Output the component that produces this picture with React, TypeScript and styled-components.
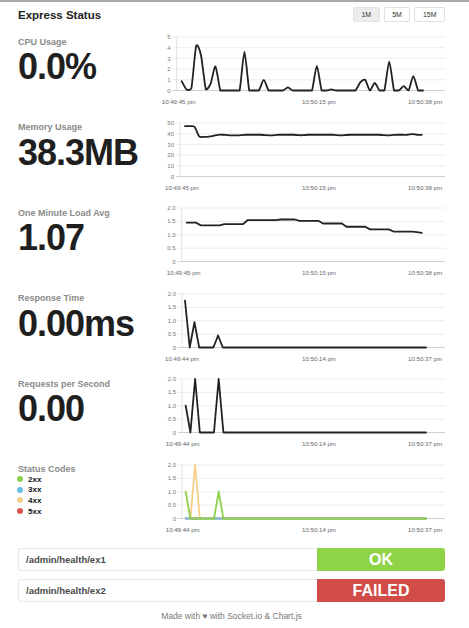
import React from "react";
import styled, { createGlobalStyle } from "styled-components";

const GlobalStyle = createGlobalStyle`
  html, body {
    margin: 0;
    padding: 0;
    background: #fff;
  }
  body {
    font-family: "Liberation Sans", Arial, Helvetica, sans-serif;
    color: #222;
  }
`;

const CHART_W = 285;
const CHART_H = 78;
const GRID_TOP = 6;
const ZERO_Y = 59.5;

type Series = { color: string; data: number[] };

type ChartProps = {
  series: Series[];
  max: number;
  ticks: string[];
  axisX: number;
  x0: number;
  x1: number;
  times: [string, string, string];
  smooth?: boolean;
};

const pad = (arr: number[], n: number) =>
  arr.concat(Array(Math.max(0, n - arr.length)).fill(0));

const steps = (list: [number, number][]) =>
  list.flatMap(([count, v]) => Array(count).fill(v) as number[]);

function buildPath(pts: [number, number][], smooth: boolean) {
  if (!smooth) return "M" + pts.map((p) => p.join(",")).join("L");
  const clamp = (y: number) => Math.min(ZERO_Y, Math.max(GRID_TOP - 2, y));
  let d = `M${pts[0][0]},${pts[0][1]}`;
  for (let i = 0; i < pts.length - 1; i++) {
    const p0 = pts[i - 1] || pts[i];
    const p1 = pts[i];
    const p2 = pts[i + 1];
    const p3 = pts[i + 2] || p2;
    const s = 0.7;
    const c1x = p1[0] + ((p2[0] - p0[0]) / 6) * s;
    const c1y = clamp(p1[1] + ((p2[1] - p0[1]) / 6) * s);
    const c2x = p2[0] - ((p3[0] - p1[0]) / 6) * s;
    const c2y = clamp(p2[1] - ((p3[1] - p1[1]) / 6) * s);
    d += `C${c1x},${c1y} ${c2x},${c2y} ${p2[0]},${p2[1]}`;
  }
  return d;
}

function Chart({ series, max, ticks, axisX, x0, x1, times, smooth }: ChartProps) {
  const plotH = ZERO_Y - GRID_TOP;
  const stepY = plotH / (ticks.length - 1);
  return (
    <ChartSvg width={CHART_W} height={CHART_H} viewBox={`0 0 ${CHART_W} ${CHART_H}`}>
      {ticks.map((t, k) => {
        const y = ZERO_Y - k * stepY;
        return (
          <g key={t}>
            <line
              x1={axisX - 4}
              x2={CHART_W}
              y1={y}
              y2={y}
              stroke={k === 0 ? "#cfcfcf" : "#ececec"}
              strokeWidth={1}
            />
            <TickText x={axisX - 6} y={y} dy="0.35em" textAnchor="end">
              {t}
            </TickText>
          </g>
        );
      })}
      <line x1={axisX} x2={axisX} y1={GRID_TOP} y2={ZERO_Y} stroke="#e2e2e2" strokeWidth={1} />
      {series.map((s, idx) => {
        const n = s.data.length;
        const pts = s.data.map(
          (v, i) =>
            [x0 + ((x1 - x0) * i) / (n - 1), ZERO_Y - (v / max) * plotH] as [number, number]
        );
        return (
          <path
            key={idx}
            d={buildPath(pts, !!smooth)}
            fill="none"
            stroke={s.color}
            strokeWidth={1.8}
            strokeLinejoin="round"
            strokeLinecap="round"
          />
        );
      })}
      <TimeText x={x0 - 3} y={72.5} textAnchor="middle">
        {times[0]}
      </TimeText>
      <TimeText x={159} y={72.5} textAnchor="middle">
        {times[1]}
      </TimeText>
      <TimeText x={282} y={72.5} textAnchor="end">
        {times[2]}
      </TimeText>
    </ChartSvg>
  );
}

const cpu = [
  0.87, 0.1, 0.2, 4.15, 3.3, 0.1, 0.65, 2.25, 0, 0,
  0, 0, 0, 3.6, 0, 0, 0, 1.0, 0, 0,
  0, 0, 0.28, 0, 0, 0, 0, 0, 2.3, 0,
  0, 0.1, 0, 0, 0, 0, 0, 0.75, 1.0, 0,
  0.7, 0, 0, 2.7, 0, 0, 0.4, 0, 1.35, 0,
  0,
];

const memory = [
  47, 47, 46.5, 37.5, 37, 37.2, 38, 39, 39, 38.7,
  38.5, 38.5, 38.7, 39, 39, 39, 39, 38.6, 38.5, 38.7,
  39, 39, 39, 39, 38.6, 38.6, 39, 39, 39, 39,
  39, 39, 38.7, 38.5, 38.8, 39, 39, 39, 39, 39,
  39, 39, 38.6, 38.5, 38.9, 39, 39, 39, 39.6, 39,
  39,
];

const load = steps([
  [3, 1.45],
  [5, 1.35],
  [5, 1.4],
  [7, 1.55],
  [4, 1.57],
  [5, 1.52],
  [5, 1.42],
  [5, 1.3],
  [5, 1.2],
  [5, 1.12],
  [1, 1.1],
  [1, 1.07],
]);

const N = 52;
const response = pad([1.75, 0, 0.95, 0, 0, 0, 0, 0.45], N);
const requests = pad([1, 0, 2, 0, 0, 0, 0, 2], N);
const s2xx = pad([1, 0, 0, 0, 0, 0, 0, 1], N);
const s4xx = pad([0, 0, 2], N);
const zeros = pad([], N);

const COLORS = {
  c2xx: "#8fd14a",
  c3xx: "#6cc0e8",
  c4xx: "#f7cf88",
  c5xx: "#d9534f",
};

const smallTicks = ["0", "0.5", "1.0", "1.5", "2.0"];
const timesA: [string, string, string] = ["10:49:45 pm", "10:50:15 pm", "10:50:38 pm"];
const timesB: [string, string, string] = ["10:49:44 pm", "10:50:14 pm", "10:50:37 pm"];

export default function App() {
  return (
    <Page>
      <GlobalStyle />
      <Header>
        <Title>Express Status</Title>
        <Spans>
          <SpanButton active>1M</SpanButton>
          <SpanButton>5M</SpanButton>
          <SpanButton>15M</SpanButton>
        </Spans>
      </Header>

      <Section>
        <Info>
          <Label>CPU Usage</Label>
          <Value>0.0%</Value>
        </Info>
        <Chart
          series={[{ color: "#222", data: cpu }]}
          max={5}
          ticks={["0", "1", "2", "3", "4", "5"]}
          axisX={16.7}
          x0={21.7}
          x1={263}
          times={timesA}
          smooth
        />
      </Section>

      <Section>
        <Info>
          <Label>Memory Usage</Label>
          <Value>38.3MB</Value>
        </Info>
        <Chart
          series={[{ color: "#222", data: memory }]}
          max={50}
          ticks={["0", "10", "20", "30", "40", "50"]}
          axisX={20}
          x0={25}
          x1={261.7}
          times={timesA}
          smooth
        />
      </Section>

      <Section>
        <Info>
          <Label>One Minute Load Avg</Label>
          <Value>1.07</Value>
        </Info>
        <Chart
          series={[{ color: "#222", data: load }]}
          max={2}
          ticks={smallTicks}
          axisX={21.7}
          x0={26.7}
          x1={261.7}
          times={timesA}
        />
      </Section>

      <Section>
        <Info>
          <Label>Response Time</Label>
          <Value>0.00ms</Value>
        </Info>
        <Chart
          series={[{ color: "#222", data: response }]}
          max={2}
          ticks={smallTicks}
          axisX={22}
          x0={25}
          x1={266}
          times={timesB}
        />
      </Section>

      <Section>
        <Info>
          <Label>Requests per Second</Label>
          <Value>0.00</Value>
        </Info>
        <Chart
          series={[{ color: "#222", data: requests }]}
          max={2}
          ticks={smallTicks}
          axisX={22}
          x0={25.7}
          x1={266}
          times={timesB}
        />
      </Section>

      <Section>
        <Info>
          <Label>Status Codes</Label>
          <Legend>
            <LegendItem color={COLORS.c2xx}>2xx</LegendItem>
            <LegendItem color={COLORS.c3xx}>3xx</LegendItem>
            <LegendItem color={COLORS.c4xx}>4xx</LegendItem>
            <LegendItem color={COLORS.c5xx}>5xx</LegendItem>
          </Legend>
        </Info>
        <Chart
          series={[
            { color: COLORS.c5xx, data: zeros },
            { color: COLORS.c4xx, data: s4xx },
            { color: COLORS.c3xx, data: zeros },
            { color: COLORS.c2xx, data: s2xx },
          ]}
          max={2}
          ticks={smallTicks}
          axisX={22}
          x0={25.7}
          x1={266}
          times={timesB}
        />
      </Section>

      <HealthList>
        <HealthRow>
          <HealthPath>/admin/health/ex1</HealthPath>
          <HealthBadge color="#8fd448">OK</HealthBadge>
        </HealthRow>
        <HealthRow>
          <HealthPath>/admin/health/ex2</HealthPath>
          <HealthBadge color="#d14b48">FAILED</HealthBadge>
        </HealthRow>
      </HealthList>

      <Footer>Made with ♥ with Socket.io &amp; Chart.js</Footer>
    </Page>
  );
}

const Page = styled.div`
  width: 469px;
  box-sizing: border-box;
  border-top: 2px solid #a9a9a9;
  padding: 0 24px 0 18px;
`;

const Header = styled.div`
  height: 29px;
  padding-bottom: 4px;
  box-sizing: border-box;
  display: flex;
  align-items: center;
  justify-content: space-between;
`;

const Title = styled.h1`
  margin: 0;
  font-size: 11.5px;
  font-weight: bold;
  color: #222;
`;

const Spans = styled.div`
  display: flex;
  gap: 4px;
`;

const SpanButton = styled.div<{ active?: boolean }>`
  height: 15px;
  box-sizing: border-box;
  padding: 0 7.5px;
  display: flex;
  align-items: center;
  font-size: 7px;
  color: #333;
  border: 1px solid ${(p) => (p.active ? "#e3e3e3" : "#e0e0e0")};
  background: ${(p) => (p.active ? "#ececec" : "#fff")};
  border-radius: 2px;
`;

const Section = styled.div`
  display: flex;
  height: 85.5px;
`;

const Info = styled.div`
  width: 142px;
  flex: none;
`;

const Label = styled.div`
  margin-top: 4.5px;
  font-size: 9px;
  line-height: 12px;
  font-weight: bold;
  color: #8a8a8a;
`;

const Value = styled.div`
  margin-top: 1.5px;
  font-size: 36px;
  line-height: 36px;
  font-weight: bold;
  letter-spacing: -1px;
  color: #1f1f1f;
`;

const Legend = styled.div`
  margin-top: -1px;
  display: flex;
  flex-direction: column;
`;

const LegendItem = styled.div<{ color: string }>`
  display: flex;
  align-items: center;
  height: 10.6px;
  font-size: 8px;
  font-weight: bold;
  color: #111;

  &::before {
    content: "";
    width: 6px;
    height: 6px;
    border-radius: 50%;
    background: ${(p) => p.color};
    margin: 0 5px 0 -1px;
  }
`;

const ChartSvg = styled.svg`
  display: block;
  flex: none;
  overflow: visible;
  font-family: "Liberation Sans", Arial, Helvetica, sans-serif;
`;

const TickText = styled.text`
  font-size: 6px;
  fill: #777;
`;

const TimeText = styled.text`
  font-size: 6.1px;
  fill: #666;
`;

const HealthList = styled.div`
  margin-top: 4px;
  display: flex;
  flex-direction: column;
  gap: 8px;
`;

const HealthRow = styled.div`
  display: flex;
  height: 23px;
`;

const HealthPath = styled.div`
  flex: 1;
  display: flex;
  align-items: center;
  padding-left: 7px;
  border: 1px solid #e9e9e9;
  border-right: none;
  border-radius: 3px 0 0 3px;
  font-size: 9.5px;
  font-weight: bold;
  color: #4a4a4a;
`;

const HealthBadge = styled.div<{ color: string }>`
  width: 128px;
  flex: none;
  display: flex;
  align-items: center;
  justify-content: center;
  background: ${(p) => p.color};
  border-radius: 0 3px 3px 0;
  color: #fff;
  font-size: 16px;
  font-weight: bold;
`;

const Footer = styled.div`
  margin-top: 8px;
  text-align: center;
  font-size: 8.5px;
  line-height: 12px;
  color: #777;
`;
